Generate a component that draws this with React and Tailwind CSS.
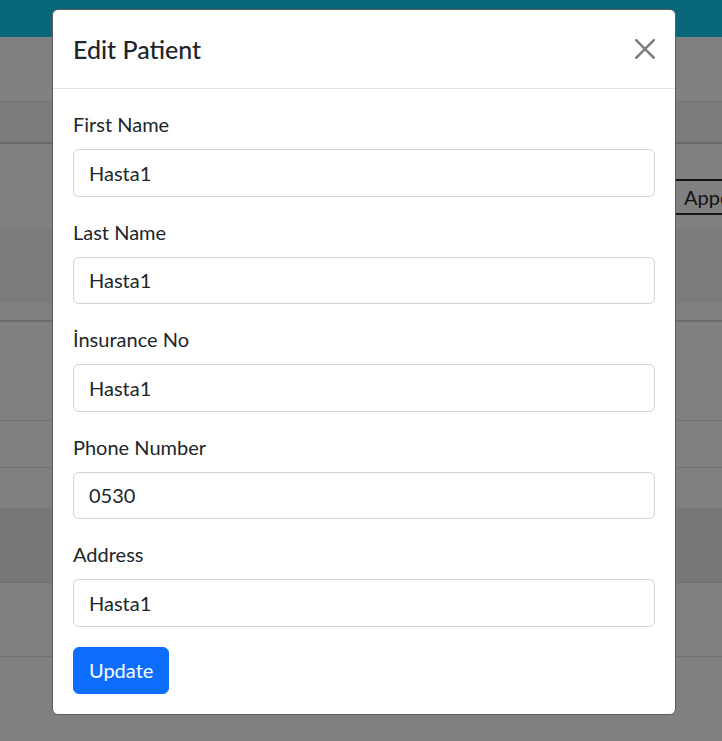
import React from "react";

const font = { fontFamily: "Lato, 'Noto Sans', sans-serif" };

function Field({ label, value }) {
  return (
    <div className="mb-[20px]">
      <label className="block mb-[10px] text-[20px] leading-[30px] text-[#212529]">{label}</label>
      <div className="h-[47.5px] flex items-center px-[15px] border border-[#ced4da] rounded-[6px] bg-white text-[20px] text-[#212529]">
        {value}
      </div>
    </div>
  );
}

export default function App() {
  return (
    <div className="relative w-[722px] h-[741px] overflow-hidden bg-[#808080]" style={font}>
      {/* dimmed page behind the modal */}
      <div className="flex flex-col">
        <div className="h-[37px] bg-[#086778]" />
        <div className="h-[64px]" />
        <div className="h-[41px] border-t border-[#747474] bg-[#7c7c7c]" />
        <div className="h-[87px] border-t-2 border-[#686868] flex items-start">
          <div className="w-[668px] shrink-0" />
          <div className="mt-[35px] shrink-0 whitespace-nowrap h-[36px] flex items-center pl-[16px] pr-[12px] border-y-2 border-[#141414] text-[20px] text-[#101214]">
            Appointments
          </div>
        </div>
        <div className="h-[73px] bg-[#7a7c7b]" />
        <div className="h-[18px]" />
        <div className="h-[100px] border-t-2 border-[#6a6a6a]" />
        <div className="h-[47px] border-t border-[#737373]" />
        <div className="h-[41px] border-t border-[#737373]" />
        <div className="h-[74px] bg-[#777777]" />
        <div className="h-[74px] border-t border-[#717171]" />
        <div className="h-[85px] border-t border-[#717171]" />
      </div>

      {/* modal */}
      <div className="absolute left-[52px] top-[9px] w-[624px] bg-white border border-[#5c5c5c] rounded-[6px]">
        <div className="flex items-center justify-between px-[20px] py-[20px] border-b border-[#dee2e6]">
          <h5 className="text-[25px] leading-[38px] font-medium text-[#212529]">Edit Patient</h5>
          <svg width="20" height="20" viewBox="0 0 16 16" className="opacity-50">
            <path
              fill="#000"
              d="M.293.293a1 1 0 0 1 1.414 0L8 6.586 14.293.293a1 1 0 1 1 1.414 1.414L9.414 8l6.293 6.293a1 1 0 0 1-1.414 1.414L8 9.414l-6.293 6.293a1 1 0 0 1-1.414-1.414L6.586 8 .293 1.707a1 1 0 0 1 0-1.414z"
            />
          </svg>
        </div>
        <div className="p-[20px]">
          <Field label="First Name" value="Hasta1" />
          <Field label="Last Name" value="Hasta1" />
          <Field label="İnsurance No" value="Hasta1" />
          <Field label="Phone Number" value="0530" />
          <Field label="Address" value="Hasta1" />
          <button className="h-[47px] px-[15px] rounded-[6px] bg-[#0d6efd] text-white text-[20px] leading-[30px] border border-[#0d6efd]">
            Update
          </button>
        </div>
      </div>
    </div>
  );
}
